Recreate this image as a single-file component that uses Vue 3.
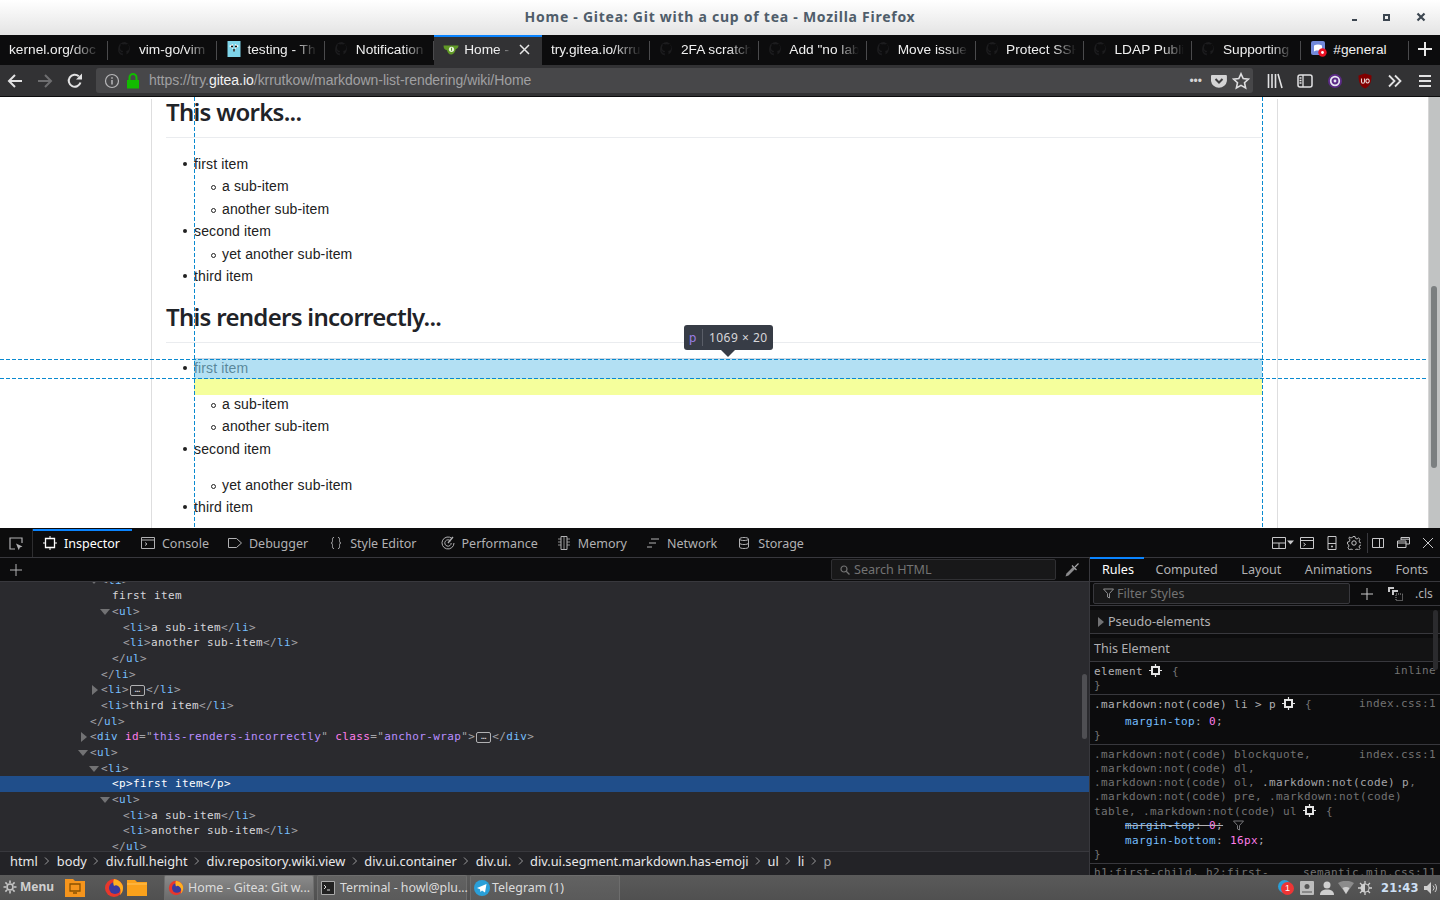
<template>
  <div class="screen">
    <header class="titlebar">
      <span class="title">Home - Gitea: Git with a cup of tea - Mozilla Firefox</span>
      <div class="winbtns">
        <span class="win-min"></span>
        <span class="win-max"></span>
        <svg width="10" height="10" viewBox="0 0 10 10"><path d="M1.5 1.5l7 7M8.5 1.5l-7 7" stroke="#3c4650" stroke-width="2.2"/></svg>
      </div>
    </header>

    <nav class="tabs">
      <div v-for="tab in tabs" :key="tab.label" class="tab" :class="{ active: tab.active }">
        <svg v-if="tab.icon === 'cat'" class="fav" viewBox="0 0 16 16"><path d="M8 1a7 7 0 0 0-2.2 13.6v-2.4c-2 .4-2.500-1-2.500-1-.3-.8-.8-1-.8-1-.7-.4 0-.4 0-.4.700 0 1.100.7 1.100.7.600 1.100 1.700.8 2.100.6.100-.5.300-.8.500-1-1.600-.2-3.200-.8-3.200-3.500 0-.8.300-1.400.700-1.900-.1-.2-.3-.9.100-1.900 0 0 .6-.2 2 .7a7 7 0 0 1 3.600 0c1.400-.9 2-.7 2-.7.400 1 .2 1.700.1 1.900.4.500.7 1.100.7 1.900 0 2.700-1.600 3.300-3.200 3.500.3.200.5.700.5 1.300v2.200A7 7 0 0 0 8 1z" fill="#1c1c1e"/></svg>
        <svg v-else-if="tab.icon === 'gopher'" class="fav" viewBox="0 0 16 16"><path d="M1.500 0h13v16h-13z" fill="#7fd5ea"/><path d="M3 5l4-2v5zM13 5L9 3v5z" fill="#fff"/><circle cx="6" cy="5.500" r="1.100" fill="#111"/><circle cx="10" cy="5.500" r="1.100" fill="#111"/><path d="M7 8h2v2.500H7z" fill="#4a4a4a"/></svg>
        <svg v-else-if="tab.icon === 'tea'" class="fav" viewBox="0 0 16 16"><path d="M.500 4.500c0 3 1.500 4.500 3.500 4.800C4.500 12 6 13.500 8 13.500s4-1.500 4.800-5.500c1.200-.2 2.700-1.300 2.700-3.500z" fill="#609926"/><circle cx="8.500" cy="8.300" r="2.600" fill="#e8f2dc"/><path d="M8.500 6.800v3" stroke="#609926"/></svg>
        <svg v-else-if="tab.icon === 'discord'" class="fav discord" viewBox="0 0 16 16"><rect x="0" y="0" width="14" height="14" rx="2" fill="#7289da"/><path d="M3 4.500c2.500-1.300 5.500-1.300 8 0v6l-2-1H5l-2 1z" fill="#fff"/><circle cx="11.500" cy="11.500" r="4.200" fill="#e81123"/><circle cx="11.500" cy="11.500" r="1.400" fill="#fff"/></svg>
        <span class="tab-label" :class="{ fade: tab.fade }">{{ tab.label }}</span>
        <svg v-if="tab.active" class="tab-close" width="11" height="11" viewBox="0 0 11 11"><path d="M1 1l9 9M10 1l-9 9" stroke="#e8e8e8" stroke-width="1.500"/></svg>
      </div>
      <svg class="newtab" width="16" height="16" viewBox="0 0 16 16"><path d="M8 1v14M1 8h14" stroke="#e8e8e8" stroke-width="2"/></svg>
    </nav>

    <div class="navbar">
      <svg class="nav-ic back" width="16" height="16" viewBox="0 0 16 16"><path d="M15 8H2M8 2L2 8l6 6" fill="none" stroke="#e2e2e3" stroke-width="2"/></svg>
      <svg class="nav-ic fwd" width="16" height="16" viewBox="0 0 16 16"><path d="M1 8h13M8 2l6 6-6 6" fill="none" stroke="#6e6e70" stroke-width="2"/></svg>
      <svg class="nav-ic reload" width="16" height="16" viewBox="0 0 16 16"><path d="M13.500 9.500A6 6 0 1 1 11.800 3.300" fill="none" stroke="#e2e2e3" stroke-width="2"/><path d="M9 6.500h6v-6z" fill="#e2e2e3"/></svg>
      <div class="urlbar">
        <svg width="16" height="16" viewBox="0 0 16 16"><circle cx="8" cy="8" r="6.500" fill="none" stroke="#b8b8ba" stroke-width="1.200"/><path d="M8 7v4.500M8 4.200v1.500" stroke="#b8b8ba" stroke-width="1.500"/></svg>
        <svg class="lock" width="14" height="16" viewBox="0 0 14 16"><path d="M1 7h12v8.500H1z" fill="#12bc00"/><path d="M3.500 7V4.500a3.500 3.500 0 0 1 7 0V7" fill="none" stroke="#12bc00" stroke-width="2"/></svg>
        <span class="url">https://try.<b>gitea.io</b>/krrutkow/markdown-list-rendering/wiki/Home</span>
        <span class="url-dots">•••</span>
        <svg width="16" height="16" viewBox="0 0 16 16"><path d="M1 2h14a1 1 0 0 1 .900 1v5A8 7.500 0 0 1 0 8V3a1 1 0 0 1 1-1z" fill="#d4d4d5"/><path d="M4.500 6L8 9.500 11.500 6" fill="none" stroke="#3e3e40" stroke-width="2"/></svg>
        <svg class="star" width="18" height="18" viewBox="0 0 18 18"><path d="M9 1.800l2.200 4.800 5.200.6-3.900 3.500 1.100 5.200L9 13.300l-4.600 2.600 1.100-5.200L1.600 7.200l5.200-.6z" fill="none" stroke="#dedee0" stroke-width="1.600"/></svg>
      </div>
      <svg class="tool" width="16" height="16" viewBox="0 0 16 16"><path d="M1.500 1v14M5 1v14M8.500 1v14M11 1l4 14" fill="none" stroke="#e2e2e3" stroke-width="1.600"/></svg>
      <svg class="tool" width="16" height="16" viewBox="0 0 16 16"><rect x="1" y="2" width="14" height="12" rx="2" fill="none" stroke="#e2e2e3" stroke-width="1.500"/><path d="M6 2v12M2.500 5h2M2.500 7.500h2M2.500 10h2" stroke="#e2e2e3" stroke-width="1.300"/></svg>
      <svg class="tool" width="16" height="16" viewBox="0 0 16 16"><circle cx="8" cy="8" r="7" fill="#5b2a86"/><circle cx="8" cy="8" r="4.300" fill="none" stroke="#e8e8f2" stroke-width="1.700"/><circle cx="8" cy="8" r="1.400" fill="#e8e8f2"/></svg>
      <svg class="tool" width="16" height="16" viewBox="0 0 16 16"><path d="M8 .500l6.500 2c0 6-1 10.500-6.500 13C2.500 13 1.500 8.500 1.500 2.500z" fill="#800000"/><path d="M4.500 5.500v3.200a1.500 1.500 0 0 0 3 0V5.500M10.500 6a1.700 2 0 1 0 .100 0z" fill="none" stroke="#e8d8d8" stroke-width="1.100"/></svg>
      <svg class="tool" width="16" height="16" viewBox="0 0 16 16"><path d="M2 2.500L7.500 8 2 13.500M8 2.500L13.500 8 8 13.500" fill="none" stroke="#e2e2e3" stroke-width="1.800"/></svg>
      <svg class="tool" width="16" height="16" viewBox="0 0 16 16"><path d="M2 3h12M2 8h12M2 13h12" stroke="#e2e2e3" stroke-width="2"/></svg>
    </div>

    <main class="page">
      <article class="segment">
        <h2 class="first">This works...</h2>
        <ul>
          <li>first item
            <ul>
              <li>a sub-item</li>
              <li>another sub-item</li>
            </ul>
          </li>
          <li>second item
            <ul>
              <li>yet another sub-item</li>
            </ul>
          </li>
          <li>third item</li>
        </ul>
        <h2>This renders incorrectly...</h2>
        <ul>
          <li>
            <p>first item</p>
            <ul>
              <li>a sub-item</li>
              <li>another sub-item</li>
            </ul>
          </li>
          <li>
            <p>second item</p>
            <ul>
              <li>yet another sub-item</li>
            </ul>
          </li>
          <li>third item</li>
        </ul>
      </article>
      <div class="scrolltrack"><div class="scrollthumb"></div></div>

      <!-- picker overlay of the inspector -->
      <div class="hl-margin"></div>
      <div class="hl-content"></div>
      <div class="guide gv g-left"></div>
      <div class="guide gv g-right"></div>
      <div class="guide gh g-top"></div>
      <div class="guide gh g-bottom"></div>
      <div class="infobar"><i>p</i><span>1069 × 20</span></div>
    </main>

    <section class="devtools">
      <div class="dt-toolbar">
        <svg class="picker" width="16" height="16" viewBox="0 0 16 16"><path d="M7 13H2V2h12v5" fill="none" stroke="#b1b1b3" stroke-width="1.200"/><path d="M8 7.500l6.500 3-2.700 1-1 2.800z" fill="#b1b1b3"/></svg>
        <div v-for="t in tools" :key="t.label" class="dt-tab" :class="[t.cls, { active: t.active }]">
          <svg width="14" height="14" viewBox="0 0 14 14" v-html="t.svg"></svg>
          <span>{{ t.label }}</span>
        </div>
        <div class="dt-right">
          <svg width="24" height="14" viewBox="0 0 24 14"><path d="M.500 1.500h13v11H.500zM.500 7h13M7 7v5.500" fill="none" stroke="#c8c8ca"/><path d="M15 4.500h7l-3.500 4z" fill="#c8c8ca"/></svg>
          <svg class="r-console" width="14" height="14" viewBox="0 0 14 14"><path d="M.500 1.500h13v11H.500zM.500 4.500h13M3.500 7l2 1.500-2 1.500" fill="none" stroke="#c8c8ca"/></svg>
          <svg class="r-phone" width="14" height="14" viewBox="0 0 14 14"><path d="M3 .500h8v13H3zM3 7.500h8" fill="none" stroke="#c8c8ca"/><circle cx="7" cy="10.500" r="1" fill="#c8c8ca"/></svg>
          <svg class="r-gear" width="14" height="14" viewBox="0 0 14 14"><circle cx="7" cy="7" r="2.200" fill="none" stroke="#c8c8ca"/><path d="M6 .500h2l.400 1.800 1.600.700 1.600-1 1.400 1.400-1 1.600.700 1.600 1.800.400v2l-1.800.400-.7 1.600 1 1.600-1.400 1.400-1.600-1-1.600.7-.4 1.800H6l-.4-1.800-1.600-.7-1.600 1L1 11.600l1-1.600-.7-1.600L.500 8V6l1.800-.4.700-1.600-1-1.600L2.400 1l1.600 1 1.600-.7z" fill="none" stroke="#c8c8ca" stroke-width=".9"/></svg>
          <span class="dt-sep"></span>
          <svg class="r-side" width="12" height="14" viewBox="0 0 12 14"><path d="M.500 2.500h11v9H.500zM7.500 2.500v9" fill="none" stroke="#c8c8ca"/></svg>
          <svg class="r-pop" width="13" height="14" viewBox="0 0 13 14"><path d="M4 4V1.500h8.500V8H9M.500 5H9v6.500H.500zM.500 7h8.500M4 3.200h8.500" fill="none" stroke="#c8c8ca"/></svg>
          <svg class="r-close" width="12" height="12" viewBox="0 0 12 12"><path d="M1 1l10 10M11 1L1 11" stroke="#c8c8ca" stroke-width="1"/></svg>
        </div>
      </div>

      <div class="dt-body">
        <div class="markup">
          <div class="markup-bar">
            <svg width="14" height="14" viewBox="0 0 14 14"><path d="M7 1v12M1 7h12" stroke="#b1b1b3"/></svg>
            <div class="search">
              <svg width="10" height="10" viewBox="0 0 10 10"><circle cx="4" cy="4" r="3" fill="none" stroke="#737373" stroke-width="1.200"/><path d="M6.200 6.200L9.500 9.500" stroke="#737373" stroke-width="1.300"/></svg>
              <span>Search HTML</span>
            </div>
            <svg class="dropper" width="16" height="16" viewBox="0 0 16 16"><path d="M1.500 14.500l1-3L9 5l2 2-6.500 6.500z" fill="#8a8a8c"/><path d="M8 3.500l4.500 4.500M11 5l3.500-3.500" stroke="#a8a8aa" stroke-width="1.200"/></svg>
          </div>
          <div class="tree">
            <div v-for="(row, i) in treeRows" :key="i" class="row" :class="{ sel: row.sel }" :style="{ paddingLeft: row.x + 'px' }">
              <i v-if="row.arrow" class="arrow" :class="row.arrow"></i>
              <template v-for="(tok, j) in row.toks" :key="j">
                <span v-if="tok[0] === 'more'" class="more">…</span>
                <span v-else :class="tok[0]">{{ tok[1] }}</span>
              </template>
            </div>
            <div class="tree-thumb"></div>
          </div>
          <div class="crumbs">
            <template v-for="(c, i) in crumbs" :key="c">
              <svg v-if="i" width="6" height="8" viewBox="0 0 6 8"><path d="M1 .500L4.500 4 1 7.500" fill="none" stroke="#9a9a9c"/></svg>
              <span :class="{ last: i === crumbs.length - 1 }">{{ c }}</span>
            </template>
          </div>
        </div>

        <aside class="side">
          <div class="side-tabs">
            <span v-for="(s, i) in sideTabs" :key="s" :class="{ on: i === 0 }">{{ s }}</span>
          </div>
          <div class="filter-row">
            <div class="filter">
              <svg width="11" height="11" viewBox="0 0 11 11"><path d="M.500 1h10L6.500 5.500V10l-2-1V5.500z" fill="none" stroke="#8f8f91"/></svg>
              <span>Filter Styles</span>
            </div>
            <svg class="f-add" width="14" height="14" viewBox="0 0 14 14"><path d="M7 1v12M1 7h12" stroke="#c8c8ca"/></svg>
            <svg class="f-pseudo" width="16" height="16" viewBox="0 0 16 16"><path d="M1 6V1h6v2H3v3z" fill="#c8c8ca"/><path d="M5 9V4h6v2H7v3z" fill="#c8c8ca"/><path d="M9 8h6.500v6.500H9z" fill="none" stroke="#a0a0a2" stroke-dasharray="1 1"/></svg>
            <span class="f-cls">.cls</span>
          </div>
          <div class="rules">
            <div class="acc"><i class="arrow right light"></i>Pseudo-elements</div>
            <div class="sect">This Element</div>

            <div class="rule">
              <div class="src">inline</div>
              <div class="line sel-line">element <Gizmo /> <span class="dim">{</span></div>
              <div class="line dim mt1">}</div>
            </div>

            <div class="rule">
              <div class="src">index.css:1</div>
              <div class="line sel-line">.markdown:not(code) li &gt; p <Gizmo /> <span class="dim">{</span></div>
              <div class="line decl mt4"><span class="prop">margin-top</span>: <span class="val">0</span>;</div>
              <div class="line dim">}</div>
            </div>

            <div class="rule third">
              <div class="src">index.css:1</div>
              <div class="line dim">.markdown:not(code) blockquote,</div>
              <div class="line dim">.markdown:not(code) dl,</div>
              <div class="line dim">.markdown:not(code) ol, <span class="sel-on">.markdown:not(code) p</span>,</div>
              <div class="line dim">.markdown:not(code) pre, .markdown:not(code)</div>
              <div class="line dim">table, .markdown:not(code) ul <Gizmo /> {</div>
              <div class="line decl mt1"><span class="struck"><span class="prop">margin-top</span>: <span class="val">0</span>;</span>
                <svg class="ovr" width="11" height="11" viewBox="0 0 11 11"><path d="M.500 1h10L6.500 5.500V10l-2-1V5.500z" fill="none" stroke="#77777a"/></svg>
              </div>
              <div class="line decl mt1"><span class="prop">margin-bottom</span>: <span class="val">16px</span>;</div>
              <div class="line dim">}</div>
            </div>

            <div class="rule cut">
              <div class="src">semantic.min.css:11</div>
              <div class="line dim">h1:first-child, h2:first-</div>
            </div>
            <div class="rules-thumb"></div>
          </div>
        </aside>
      </div>
    </section>

    <footer class="taskbar">
      <div class="start">
        <svg width="14" height="14" viewBox="0 0 14 14"><circle cx="7" cy="7" r="3" fill="none" stroke="#c6c6c6" stroke-width="1.600"/><path d="M7 .500v2.500M7 11v2.500M.500 7H3M11 7h2.500M2.400 2.400l1.800 1.800M9.800 9.800l1.800 1.800M11.600 2.400L9.800 4.200M4.200 9.800l-1.800 1.800" stroke="#c6c6c6" stroke-width="1.600"/></svg>
        <span>Menu</span>
      </div>
      <svg class="q1" width="22" height="20" viewBox="0 0 22 20"><path d="M1 1h8l2 2h10v16H1z" fill="#f6951d"/><path d="M6 6h10v7H6zM9 15h4" fill="none" stroke="#8a5200" stroke-width="1.300"/></svg>
      <svg class="q2" width="20" height="20" viewBox="0 0 20 20"><circle cx="10" cy="10" r="9" fill="#e8372c"/><circle cx="11" cy="10" r="6" fill="#3a3a9e"/><path d="M10 1c6 1 9 5 9 9 0 3-1 5-3 7 1-3 1-7-2-9-1-1-3-1-4 0-1-2-1-5 0-7z" fill="#ffb01f"/></svg>
      <svg class="q3" width="20" height="18" viewBox="0 0 20 18"><path d="M0 1h8l2 2h10v14H0z" fill="#f9a11b"/><path d="M0 5h20" stroke="#ffc45d"/></svg>
      <div class="task active">
        <svg width="16" height="16" viewBox="0 0 20 20"><circle cx="10" cy="10" r="9" fill="#e8372c"/><circle cx="11" cy="10" r="6" fill="#3a3a9e"/><path d="M10 1c6 1 9 5 9 9 0 3-1 5-3 7 1-3 1-7-2-9-1-1-3-1-4 0-1-2-1-5 0-7z" fill="#ffb01f"/></svg>
        <span>Home - Gitea: Git w...</span>
      </div>
      <div class="task term">
        <svg width="14" height="14" viewBox="0 0 14 14"><path d="M.500.500h13v13H.500z" fill="#222" stroke="#aaa"/><path d="M3 4l2 2-2 2M6 9h3" fill="none" stroke="#ddd"/></svg>
        <span>Terminal - howl@plu...</span>
      </div>
      <div class="task tele">
        <svg width="16" height="16" viewBox="0 0 16 16"><circle cx="8" cy="8" r="8" fill="#2a9fd8"/><path d="M3 8l9.500-4-1.500 8.500-3-2-1.500 1.500-.5-2.700z" fill="#fff"/></svg>
        <span>Telegram (1)</span>
      </div>

      <div class="tray">
        <div class="badge"><span>1</span></div>
        <svg class="tr-box" width="14" height="14" viewBox="0 0 14 14"><rect width="14" height="14" rx="1" fill="#bdbdbd"/><circle cx="7" cy="5.500" r="2.500" fill="#555"/><path d="M2 11h10" stroke="#555"/></svg>
        <svg class="tr-user" width="14" height="14" viewBox="0 0 14 14"><circle cx="7" cy="4" r="3.500" fill="#cfcfcf"/><path d="M0 14c0-4 3-5.500 7-5.500s7 1.500 7 5.500z" fill="#cfcfcf"/></svg>
        <svg class="tr-wifi" width="16" height="13" viewBox="0 0 16 13"><path d="M0 2c5-3 11-3 16 0L8 13z" fill="#8c8c8c"/><path d="M4.500 7c2-1.500 5-1.500 7 0L8 13z" fill="#cfcfcf"/></svg>
        <svg class="tr-sun" width="14" height="14" viewBox="0 0 14 14"><circle cx="7" cy="7" r="4.500" fill="#cfcfcf"/><path d="M7 0v14M0 7h14M2 2l10 10M12 2L2 12" stroke="#cfcfcf" stroke-width="1.300"/><path d="M7 3.500a3.500 3.500 0 0 1 0 7z" fill="#555"/></svg>
        <span class="clock">21:43</span>
        <svg class="tr-vol" width="15" height="14" viewBox="0 0 15 14"><path d="M0 5h3l4-4v12l-4-4H0z" fill="#cfcfcf"/><path d="M9 4.500a3.500 3.500 0 0 1 0 5M11 3a6 6 0 0 1 0 8" fill="none" stroke="#cfcfcf"/></svg>
      </div>
    </footer>
  </div>
</template>

<script setup>
import { h } from 'vue'

// small square icon that follows the selectors in the rules view
const Gizmo = () => h('svg', { class: 'gizmo', width: 13, height: 13, viewBox: '0 0 13 13' }, [
  h('path', { d: 'M3 3h7v7H3z', fill: 'none', stroke: '#e4e4e4', 'stroke-width': 2 }),
  h('path', { d: 'M6.500 0v3M6.500 10v3M0 6.500h3M10 6.500h3', stroke: '#e4e4e4', 'stroke-width': 1.2 }),
])

const tabs = [
  { label: 'kernel.org/doc', fade: true },
  { label: 'vim-go/vim', icon: 'cat', fade: true },
  { label: 'testing - Th', icon: 'gopher', fade: true },
  { label: 'Notification', icon: 'cat', fade: true },
  { label: 'Home - Gitea', icon: 'tea', active: true, fade: true },
  { label: 'try.gitea.io/krru', fade: true },
  { label: '2FA scratch', icon: 'cat', fade: true },
  { label: 'Add "no lab', icon: 'cat', fade: true },
  { label: 'Move issues', icon: 'cat', fade: true },
  { label: 'Protect SSH', icon: 'cat', fade: true },
  { label: 'LDAP Public', icon: 'cat', fade: true },
  { label: 'Supporting', icon: 'cat', fade: true },
  { label: '#general', icon: 'discord' },
]

const st = 'fill="none" stroke="currentColor"'
const tools = [
  { label: 'Inspector', active: true, svg: `<path d="M2.500 2.500h9v9h-9z" ${st} stroke-width="1.300"/><path d="M7 0v2.500M7 11.500V14M0 7h2.500M11.500 7H14" stroke="currentColor"/>` },
  { label: 'Console', svg: `<path d="M.500 1.500h13v11H.500zM.500 4h13M4 6.500l2 1.500-2 1.500" ${st}/>` },
  { label: 'Debugger', cls: 'tight2', svg: `<path d="M.500 2.500h8l5 4.500-5 4.500h-8z" ${st}/>` },
  { label: 'Style Editor', svg: `<path d="M5 1.500c-2 0-1.500 1.500-1.500 3S3 7 2 7c1 0 1.500 1 1.500 2.500s-.5 3 1.500 3M9 1.500c2 0 1.500 1.500 1.500 3S11 7 12 7c-1 0-1.500 1-1.500 2.500s.5 3-1.500 3" ${st}/>` },
  { label: 'Performance', cls: 'wide3', svg: `<path d="M11 2.500A6 6 0 1 0 13 7" ${st}/><path d="M9.500 5A3.200 3.200 0 1 0 10.200 7" ${st}/><path d="M7 7l5-6" stroke="currentColor" stroke-width="1.300"/>` },
  { label: 'Memory', cls: 'tight2', svg: `<path d="M4 .500h6v13H4z" ${st}/><path d="M7 1v12M1 3h3M1 6h3M1 9h3M10 3h3M10 6h3M10 9h3" stroke="currentColor" stroke-width=".8"/>` },
  { label: 'Network', cls: 'tight2', svg: `<path d="M5 3h8M3 7h7M1 11h5" stroke="currentColor"/>` },
  { label: 'Storage', cls: 'tight1', svg: `<path d="M2.500 3c0-2 9-2 9 0v8c0 2-9 2-9 0zM2.500 3c0 2 9 2 9 0M2.500 7c0 2 9 2 9 0" ${st}/>` },
]

const b = (s) => ['br', s]
const n = (s) => ['tag', s]
const t = (s) => ['txt', s]
const a = (s) => ['attr', s]
const v = (s) => ['aval', s]
const more = ['more']

const treeRows = [
  { x: 101, arrow: 'down', toks: [b('<'), n('li'), b('>')] },
  { x: 112, toks: [t('first item')] },
  { x: 112, arrow: 'down', toks: [b('<'), n('ul'), b('>')] },
  { x: 123, toks: [b('<'), n('li'), b('>'), t('a sub-item'), b('</'), n('li'), b('>')] },
  { x: 123, toks: [b('<'), n('li'), b('>'), t('another sub-item'), b('</'), n('li'), b('>')] },
  { x: 112, toks: [b('</'), n('ul'), b('>')] },
  { x: 101, toks: [b('</'), n('li'), b('>')] },
  { x: 101, arrow: 'right', toks: [b('<'), n('li'), b('>'), more, b('</'), n('li'), b('>')] },
  { x: 101, toks: [b('<'), n('li'), b('>'), t('third item'), b('</'), n('li'), b('>')] },
  { x: 90, toks: [b('</'), n('ul'), b('>')] },
  { x: 90, arrow: 'right', toks: [b('<'), n('div'), b(' '), a('id'), b('="'), v('this-renders-incorrectly'), b('" '), a('class'), b('="'), v('anchor-wrap'), b('">'), more, b('</'), n('div'), b('>')] },
  { x: 90, arrow: 'down', toks: [b('<'), n('ul'), b('>')] },
  { x: 101, arrow: 'down', toks: [b('<'), n('li'), b('>')] },
  { x: 112, sel: true, toks: [t('<p>first item</p>')] },
  { x: 112, arrow: 'down', toks: [b('<'), n('ul'), b('>')] },
  { x: 123, toks: [b('<'), n('li'), b('>'), t('a sub-item'), b('</'), n('li'), b('>')] },
  { x: 123, toks: [b('<'), n('li'), b('>'), t('another sub-item'), b('</'), n('li'), b('>')] },
  { x: 112, toks: [b('</'), n('ul'), b('>')] },
]

const crumbs = ['html', 'body', 'div.full.height', 'div.repository.wiki.view', 'div.ui.container', 'div.ui.', 'div.ui.segment.markdown.has-emoji', 'ul', 'li', 'p']
const sideTabs = ['Rules', 'Computed', 'Layout', 'Animations', 'Fonts']
</script>

<style>
html, body { margin: 0; background: #0c0c0d; overflow: hidden; }
</style>

<style scoped>
.screen {
  width: 1440px;
  height: 900px;
  display: flex;
  flex-direction: column;
  overflow: hidden;
  font-family: "Liberation Sans", sans-serif;
}

/* window title */
.titlebar {
  height: 35px;
  flex: none;
  background: linear-gradient(#ffffff, #e4e4e4);
  display: flex;
  align-items: center;
  justify-content: center;
  position: relative;
  padding-bottom: 2px;
  box-sizing: border-box;
}
.title {
  font: bold 14px "Noto Sans", sans-serif;
  letter-spacing: .74px;
  color: #4f5d6a;
}
.winbtns {
  position: absolute;
  right: 14px;
  top: 12px;
  display: flex;
  gap: 26px;
  align-items: flex-end;
}
.win-min { width: 5px; height: 2px; background: #3c4650; margin-bottom: 1px; }
.win-max { width: 7px; height: 7px; border: 2px solid #3c4650; box-sizing: border-box; margin-bottom: 1px; }

/* browser tabs */
.tabs {
  height: 30px;
  flex: none;
  background: #0c0c0d;
  display: flex;
  align-items: stretch;
  position: relative;
}
.tab {
  width: 108.4px;
  box-sizing: border-box;
  padding: 0 8px 2px 9px;
  display: flex;
  align-items: center;
  gap: 5.6px;
  color: #f0f0f0;
  font-size: 13.700px;
  position: relative;
  white-space: nowrap;
}
.tab::after {
  content: "";
  position: absolute;
  right: 0;
  top: 6px;
  bottom: 5px;
  width: 1px;
  background: #4a4a4c;
}
.tab.active {
  background: #323234;
  border-top: 2px solid #0a84ff;
  padding-bottom: 4px;
}
.tab.active::after { display: none; }
.fav { width: 16px; height: 16px; flex: none; }
.fav.discord { margin: 0 1px 0 1px; }
.tab-label { flex: 1; overflow: hidden; min-width: 0; }
.tab-label.fade {
  -webkit-mask-image: linear-gradient(to right, #000 68%, transparent 100%);
  mask-image: linear-gradient(to right, #000 68%, transparent 100%);
}
.tab-close { flex: none; margin-right: 4px; }
.newtab { margin: 6px 0 0 8px; }

/* url row */
.navbar {
  height: 31px;
  flex: none;
  background: #323234;
  border-bottom: 1px solid #0c0c0d;
  display: flex;
  align-items: center;
  box-sizing: content-box;
}
.nav-ic { flex: none; }
.back { margin-left: 7px; }
.fwd { margin-left: 14px; }
.reload { margin-left: 14px; }
.urlbar {
  margin-left: 13px;
  width: 1157px;
  height: 25px;
  background: #474749;
  border-radius: 3px;
  display: flex;
  align-items: center;
  gap: 3px;
  padding: 0 3px 0 8px;
  box-sizing: border-box;
}
.lock { margin: 0 6px 0 3px; }
.url { flex: 1; font-size: 14px; line-height: 16px; padding-bottom: 2px; color: #a0a0a2; letter-spacing: -.04px; }
.url b { font-weight: normal; color: #f2f2f2; }
.url-dots { font-size: 12px; color: #d4d4d5; margin-right: 6px; letter-spacing: 0; }
.star { margin-left: 2px; }
.tool { margin-left: 14px; flex: none; }

/* web page */
.page {
  height: 431px;
  flex: none;
  background: #fff;
  position: relative;
  overflow: hidden;
  color: #212121;
  font-size: 14px;
  letter-spacing: .14px;
}
.segment {
  margin-left: 151px;
  width: 1127px;
  height: 500px;
  box-sizing: border-box;
  border: 1px solid #dededf;
  border-width: 0 1px;
  padding: 0 15px 0 14px;
}
h2 {
  font: 600 24px/26px "Noto Sans", "Open Sans", sans-serif;
  letter-spacing: -.72px;
  margin: 18px 0 15px;
  padding-bottom: 12px;
  height: 26px;
  border-bottom: 1px solid #eaecef;
  color: #1f2328;
}
h2.first { margin-top: 2px; padding-bottom: 12px; margin-bottom: 16px; }
ul { margin: 0; padding-left: 28px; list-style: none; }
li { line-height: 20px; position: relative; }
li + li, li ul { margin-top: 2.4px; }
li p { margin: 0 0 16px; line-height: 20px; }
li > ul { margin-bottom: 0; }
/* bullets sit closer to the text than the default marker */
li::before {
  content: "";
  position: absolute;
  left: -11px;
  top: 8px;
  width: 4px;
  height: 4px;
  border-radius: 50%;
  background: #212121;
}
li li::before {
  width: 5px;
  height: 5px;
  box-sizing: border-box;
  background: none;
  border: 1px solid #212121;
  top: 9px;
}

.scrolltrack {
  position: absolute;
  right: 0;
  top: 0;
  bottom: 0;
  width: 12px;
  background: #c1c3c3;
  border-left: 1px solid #d6d6d6;
  box-sizing: border-box;
}
.scrollthumb {
  position: absolute;
  left: 2px;
  top: 189px;
  width: 6px;
  height: 182px;
  border-radius: 3px;
  background: #7b7f80;
}
.hl-content {
  position: absolute;
  left: 194px;
  top: 262px;
  width: 1068px;
  height: 20px;
  background: rgba(128, 203, 235, .6);
  box-shadow: 0 -1px 0 #ccd6e2;
}
.hl-margin {
  position: absolute;
  left: 194px;
  top: 282px;
  width: 1068px;
  height: 16px;
  background: #f5ff9c;
}
.guide { position: absolute; }
.gv {
  width: 1px;
  top: 0;
  bottom: 0;
  background: repeating-linear-gradient(to bottom, #0a8ad0 0 4px, transparent 4px 6px);
}
.gh {
  height: 1px;
  left: 0;
  right: 12px;
  background: repeating-linear-gradient(to right, #0a8ad0 0 4px, transparent 4px 6px);
}
.g-left { left: 194px; }
.g-right { left: 1262px; }
.g-top { top: 262px; }
.g-bottom { top: 281px; }
.infobar {
  position: absolute;
  left: 684px;
  top: 228px;
  width: 89px;
  height: 25px;
  box-sizing: border-box;
  background: #373c46;
  border-radius: 3px;
  color: #d7d7db;
  font: 12px "Noto Sans", sans-serif;
  letter-spacing: .5px;
  display: flex;
  align-items: center;
  padding-left: 5px;
}
.infobar::after {
  content: "";
  position: absolute;
  left: 37px;
  bottom: -7px;
  border: 7px solid transparent;
  border-bottom: 0;
  border-top-color: #373c46;
}
.infobar i { font-style: normal; color: #9b7fe6; padding-right: 5px; border-right: 1px solid #5a5e68; margin-right: 6px; }

/* developer tools */
.devtools {
  flex: 1;
  min-height: 0;
  border-top: 1px solid #0c0c0d;
  background: #0c0c0d;
  display: flex;
  flex-direction: column;
  font-family: "Noto Sans", sans-serif;
  font-size: 12.600px;
}
.dt-toolbar {
  height: 28px;
  flex: none;
  display: flex;
  align-items: stretch;
  border-bottom: 1px solid #38383d;
  color: #b1b1b3;
  font-size: 12.500px;
}
.picker { margin: 7px 8px 0 8px; }
.dt-tab {
  display: flex;
  align-items: center;
  gap: 7px;
  padding: 0 12px 0 0;
  margin-left: 9px;
  position: relative;
  white-space: nowrap;
}
.dt-tab.tight2 { margin-left: 7px; }
.dt-tab.tight1 { margin-left: 8px; }
.dt-tab.wide3 { margin-left: 12px; }
.dt-tab svg { flex: none; }
.dt-tab:first-of-type { padding-left: 10px; margin-left: 0; }
.dt-tab.active { color: #fff; border-left: 1px solid #2e2e30; }
.dt-tab.active::before {
  content: "";
  position: absolute;
  top: 0;
  left: 0;
  right: 0;
  height: 2px;
  background: #0a84ff;
}
.dt-right {
  margin-left: auto;
  display: flex;
  align-items: center;
  padding-right: 6px;
}
.r-console { margin-left: 4px; }
.r-phone { margin-left: 11px; }
.r-gear { margin-left: 8px; }
.dt-sep { width: 1px; height: 20px; background: #38383d; margin: 0 4px 0 6px; }
.r-pop { margin-left: 13px; }
.r-close { margin-left: 12px; }
.dt-body { flex: 1; min-height: 0; display: flex; }
.markup {
  width: 1089px;
  flex: none;
  display: flex;
  flex-direction: column;
  border-right: 1px solid #38383d;
  box-sizing: content-box;
  background: #2a2a2e;
}
.markup-bar {
  height: 24px;
  flex: none;
  background: #0c0c0d;
  display: flex;
  align-items: center;
  padding-left: 9px;
  box-sizing: border-box;
  border-bottom: 1px solid #38383d;
}
.search {
  margin-left: 808px;
  width: 225px;
  height: 21px;
  box-sizing: border-box;
  background: #181819;
  border: 1px solid #303033;
  border-radius: 2px;
  display: flex;
  align-items: center;
  gap: 4px;
  padding-left: 8px;
  color: #737373;
}
.dropper { margin-left: 8px; }
.tree {
  flex: 1;
  min-height: 0;
  overflow: hidden;
  position: relative;
  font: 11px/15.670px "DejaVu Sans Mono", monospace;
  letter-spacing: .38px;
  color: #d7d7db;
}
.tree > .row:first-child { margin-top: -9.300px; }
.row { height: 15.670px; white-space: pre; position: relative; }
.row.sel { background: #204e8a; color: #fff; }
.row.sel .txt { color: #fff; }
.arrow { position: absolute; }
.arrow.down {
  border: 5px solid transparent;
  border-top: 6px solid #727274;
  border-bottom: 0;
  margin-left: -12px;
  margin-top: 5px;
}
.arrow.right {
  border: 5px solid transparent;
  border-left: 6px solid #727274;
  border-right: 0;
  margin-left: -9px;
  margin-top: 3px;
}
.br { color: #a4a4a8; }
.tag { color: #75bfff; }
.txt { color: #d7d7db; }
.attr { color: #ff7de9; }
.aval { color: #b98eff; }
.more {
  display: inline-block;
  width: 13px;
  height: 9px;
  line-height: 7px;
  margin: 3px 1px 0;
  border: 1px solid #b1b1b3;
  border-radius: 2px;
  text-align: center;
  font-size: 9px;
  letter-spacing: 0;
  vertical-align: top;
}
.tree-thumb {
  position: absolute;
  right: 2px;
  top: 92px;
  width: 5px;
  height: 65px;
  border-radius: 3px;
  background: #4f4f53;
}
.crumbs {
  height: 24px;
  flex: none;
  box-sizing: border-box;
  border-top: 1px solid #38383d;
  display: flex;
  align-items: center;
  gap: 6.500px;
  padding: 0 0 5px 10px;
  color: #e8e8ea;
  white-space: nowrap;
  background: #232327;
  position: relative;
  font-size: 12.800px;
}
.crumbs .last { color: #a8a8aa; }

.side {
  flex: 1;
  min-width: 0;
  display: flex;
  flex-direction: column;
  color: #b1b1b3;
}
.side-tabs {
  height: 24px;
  flex: none;
  display: flex;
  align-items: center;
  border-bottom: 1px solid #38383d;
  box-sizing: border-box;
  position: relative;
}
.side-tabs span { padding: 0 11.500px 0 12px; }
.side-tabs .on { color: #fff; padding-right: 9.500px; }
.side-tabs::before {
  content: "";
  position: absolute;
  left: 0;
  top: -1px;
  width: 54px;
  height: 2px;
  background: #0a84ff;
}
.filter-row {
  height: 24px;
  flex: none;
  display: flex;
  align-items: center;
  padding-left: 3px;
  border-bottom: 1px solid #38383d;
  box-sizing: border-box;
}
.filter {
  width: 257px;
  height: 21px;
  box-sizing: border-box;
  background: #181819;
  border: 1px solid #38383d;
  border-radius: 2px;
  display: flex;
  align-items: center;
  gap: 3px;
  padding-left: 9px;
  color: #737373;
}
.f-add { margin-left: 10px; }
.f-pseudo { margin-left: 13px; }
.f-cls { margin-left: 12px; font-size: 12px; }
.rules {
  flex: 1;
  min-height: 0;
  overflow: hidden;
  position: relative;
  font: 11px/14px "DejaVu Sans Mono", monospace;
  letter-spacing: .38px;
}
.acc {
  margin-top: 4px;
  height: 24px;
  box-sizing: border-box;
  padding: 3px 0 0 18px;
  background: #131314;
  border-bottom: 1px solid #38383d;
  font: 12.600px/18px "Noto Sans", sans-serif;
  letter-spacing: 0;
  color: #b1b1b3;
  position: relative;
}
.arrow.light { left: 17px; top: 4px; border-left-color: #727274; }
.sect {
  margin-top: 4px;
  height: 24px;
  box-sizing: border-box;
  padding: 2px 0 0 4px;
  background: #131314;
  border-bottom: 1px solid #38383d;
  font: 12.600px/18px "Noto Sans", sans-serif;
  letter-spacing: 0;
  color: #b1b1b3;
}
.rule {
  padding: 2px 4px 1px 4px;
  border-bottom: 1px solid #38383d;
  position: relative;
  color: #b1b1b3;
}
.rule.third { padding-top: 3px; }
.line { height: 14px; white-space: nowrap; }
.mt1 { margin-top: 1px; }
.mt4 { margin-top: 4px; }
.src { float: right; color: #737373; }
.sel-line { color: #b1b1b3; }
.dim { color: #737373; }
.sel-on { color: #a4a4a8; }
.decl { padding-left: 31px; color: #b1b1b3; }
.prop { color: #75bfff; }
.val { color: #ff7de9; }
.struck { text-decoration: line-through; color: #b1b1b3; }
.ovr { vertical-align: -2px; margin-left: 10px; }
.gizmo { vertical-align: -2px; margin: 0 3px 0 -1px; }
.rule.cut { border: 0; }
.rules-thumb {
  position: absolute;
  right: 2px;
  top: 4px;
  width: 5px;
  height: 60px;
  border-radius: 3px;
  background: #2b2b2e;
}

/* desktop panel */
.taskbar {
  height: 25px;
  flex: none;
  background: linear-gradient(#5a5a5a, #505050);
  display: flex;
  align-items: center;
  color: #dcdcdc;
  font-size: 12.400px;
  position: relative;
}
.start {
  display: flex;
  align-items: center;
  gap: 3px;
  padding: 0 0 2px 3px;
  font-weight: bold;
  color: #d0d0d0;
  font-family: "Noto Sans", sans-serif;
  font-size: 12px;
}
.q1 { margin-left: 10px; }
.q2 { margin-left: 18px; }
.q3 { margin-left: 3px; }
.task {
  width: 150px;
  height: 25px;
  box-sizing: border-box;
  margin-left: 3px;
  padding: 0 0 1px 3px;
  display: flex;
  align-items: center;
  gap: 4px;
  background: linear-gradient(#626262, #5a5a5a);
  border: 1px solid #6d6d6d;
  border-bottom: 0;
  border-radius: 2px 2px 0 0;
  white-space: nowrap;
  font-family: "Noto Sans", sans-serif;
}
.task svg { flex: none; }
.task.active { margin-left: 17px; background: linear-gradient(#8a8a8a, #6a6a6a); }
.task.term { gap: 5px; letter-spacing: -.04px; }
.task.tele { gap: 2px; }
.tray {
  margin-left: auto;
  display: flex;
  align-items: center;
  padding-right: 1px;
}
.badge {
  width: 13px;
  height: 13px;
  border-radius: 50%;
  background: #2a9fd8;
  position: relative;
  margin-right: 4px;
  margin-top: -2px;
}
.badge span {
  position: absolute;
  left: 3px;
  top: 2px;
  width: 13px;
  height: 13px;
  border-radius: 50%;
  background: #ee3535;
  color: #fff;
  font-size: 9px;
  line-height: 13px;
  text-align: center;
}
.tr-box { margin-left: 5px; }
.tr-user { margin-left: 6px; }
.tr-wifi { margin-left: 4px; }
.tr-sun { margin-left: 4px; }
.clock {
  margin-left: 9px;
  width: 37px;
  white-space: nowrap;
  font: bold 11.500px "DejaVu Sans", sans-serif;
  color: #cfe0f5;
  letter-spacing: .2px;
}
.tr-vol { margin-left: 6px; }
</style>
